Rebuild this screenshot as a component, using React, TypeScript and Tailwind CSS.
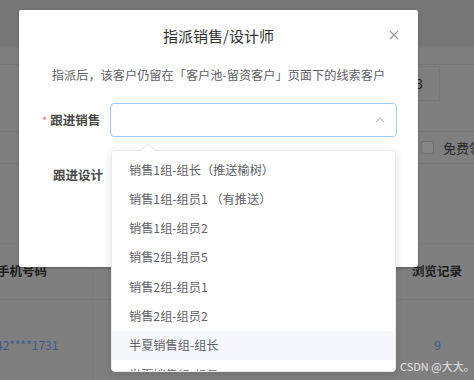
import React from 'react';

const options = [
  '销售1组-组长（推送榆树）',
  '销售1组-组员1 （有推送）',
  '销售1组-组员2',
  '销售2组-组员5',
  '销售2组-组员1',
  '销售2组-组员2',
  '半夏销售组-组长',
  '半夏销售组-组员1',
];

export default function App() {
  return (
    <div
      className="relative w-[474px] h-[380px] overflow-hidden bg-[#7f7f7f] text-[#303133]"
      style={{ fontFamily: '"Noto Sans CJK SC", "Noto Sans", sans-serif' }}
    >
      {/* Page underneath the mask */}
      <div className="flex flex-col">
        <div className="shrink-0 h-[48px] bg-[#777777] border-b border-[#7a7a7a]" />
        <div className="shrink-0 h-[17px] border-b border-[#787878]" />
        <div className="shrink-0 flex justify-end h-[67px] border-b border-[#787878] pt-[1px]">
          <div className="w-[60px] h-[35px] mr-[34px] border border-[#787878] flex items-center justify-end pr-[16px] text-[14px] text-[#222]">
            3
          </div>
        </div>
        <div className="shrink-0 flex items-center justify-end h-[32px] border-b border-[#787878] gap-[9px]">
          <div className="w-[13px] h-[13px] border border-[#707070] rounded-[2px] bg-[#858585]" />
          <span className="text-[13px] text-[#2a2a2a] w-[31px] overflow-hidden whitespace-nowrap">免费领</span>
        </div>
        <div className="shrink-0 h-[80px] border-b border-[#7b7b7b]" />
        <div className="shrink-0 flex items-center justify-between h-[56px] border-b border-[#787878] text-[12.5px] font-bold text-[#1e1e1e]">
          <span className="-ml-[3px]">手机号码</span>
          <span className="mr-[12px]">浏览记录</span>
        </div>
        <div className="shrink-0 flex items-center justify-between h-[90px] text-[12px] text-[#3b5c8e]">
          <span className="-ml-[4px]">42****1731</span>
          <span className="mr-[33px]">9</span>
        </div>
      </div>
      <div className="absolute left-[92px] top-[258px] h-[130px] border-l border-[#7a7a7a]" />

      {/* Dialog */}
      <div className="absolute left-[19px] top-[10px] w-[399px] h-[257px] bg-white rounded-[2px] shadow-[0_1px_3px_rgba(0,0,0,0.3)]">
        <div className="relative flex items-center justify-center h-[50px] pt-[2px]">
          <span className="text-[15px] text-[#303133]">指派销售/设计师</span>
          <svg
            className="absolute right-[19px] top-[20px]"
            width="10"
            height="10"
            viewBox="0 0 10 10"
            fill="none"
            stroke="#909399"
            strokeWidth="1.1"
          >
            <path d="M1 1L9 9M9 1L1 9" />
          </svg>
        </div>
        <p className="text-center text-[12.2px] text-[#606266] mt-[6px]">
          指派后，该客户仍留在「客户池-留资客户」页面下的线索客户
        </p>
        <div className="flex items-center mt-[19px] pl-[23px]">
          <div className="w-[68px] text-[12.5px] font-bold text-[#484848] flex items-center">
            <span className="text-[#f56c6c] mr-[3px] font-normal text-[11px]">*</span>
            跟进销售
          </div>
          <div className="flex items-center justify-end w-[287px] h-[34px] border border-[#9fcaf5] rounded-[4px] pr-[10px]">
            <svg width="12" height="12" viewBox="0 0 12 12" fill="none" stroke="#c0c4cc" strokeWidth="1.1">
              <path d="M2 8L6 4L10 8" />
            </svg>
          </div>
        </div>
        <div className="flex items-center mt-[29px] pl-[34px]">
          <span className="text-[12.5px] font-bold text-[#484848]">跟进设计</span>
        </div>
      </div>

      {/* Select dropdown */}
      <div className="absolute left-[111px] top-[150px] w-[285px] h-[222px] bg-white rounded-[4px] shadow-[0_2px_10px_rgba(0,0,0,0.12)] border border-[#ececec] overflow-hidden">
        <ul className="flex flex-col pt-[4px]">
          {options.map((o, i) => (
            <li
              key={o}
              className={`shrink-0 flex items-center h-[29.3px] pl-[17px] text-[12.2px] text-[#606266] whitespace-nowrap ${
                i === 6 ? 'bg-[#f5f7fa]' : ''
              }`}
            >
              {o}
            </li>
          ))}
        </ul>
      </div>
      <div className="absolute left-[143px] top-[145px] w-[10px] h-[10px] bg-white rotate-45 border-l border-t border-[#ececec]" />

      {/* Watermark */}
      <div className="absolute left-[400px] top-[358px] text-[11px] text-[#e6e6e6] whitespace-nowrap">
        CSDN @大大。
      </div>
    </div>
  );
}
